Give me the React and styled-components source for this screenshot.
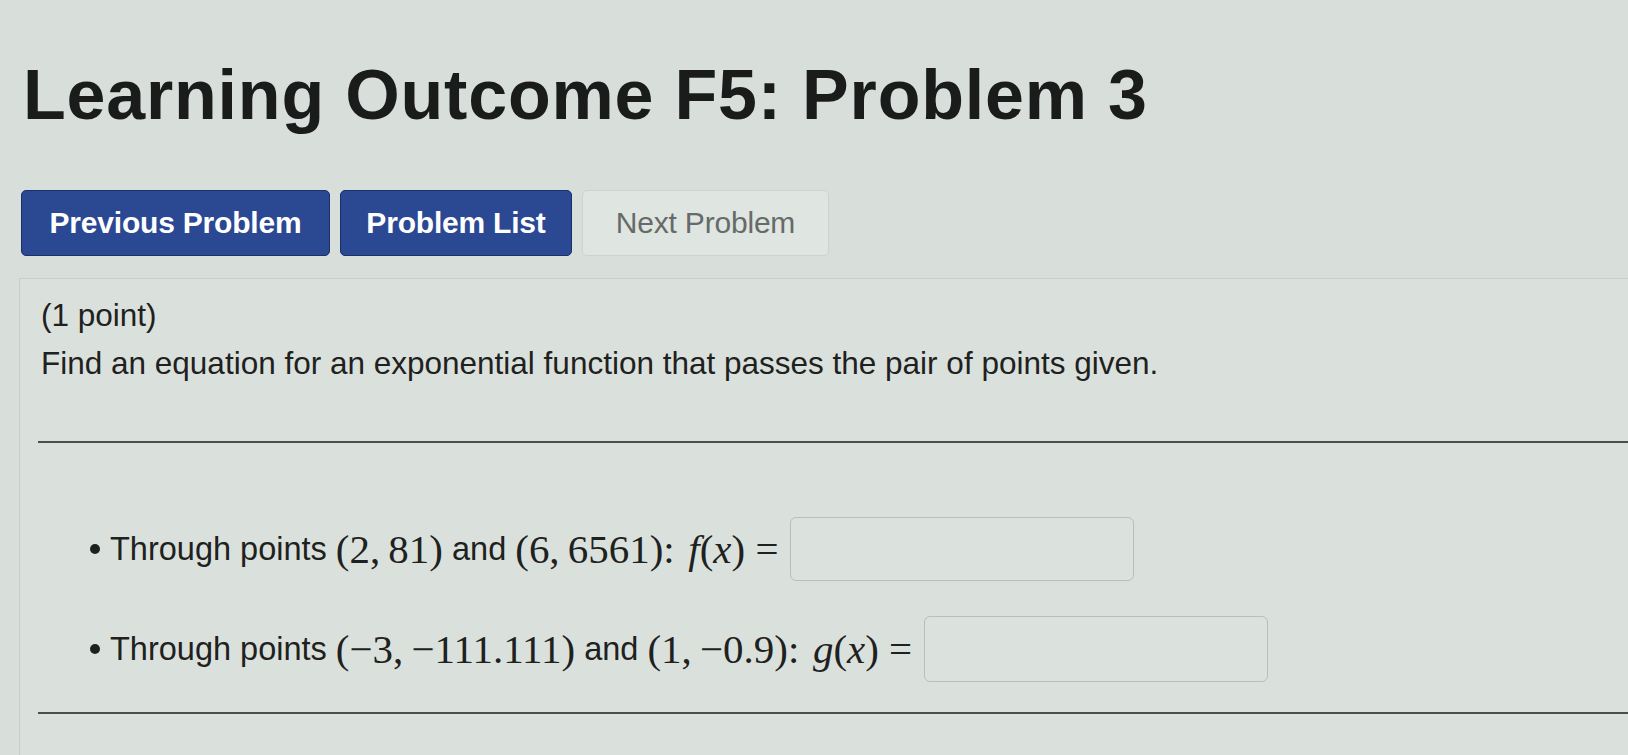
import React from "react";
import styled, { createGlobalStyle } from "styled-components";

const Global = createGlobalStyle`
  html, body {
    margin: 0;
    padding: 0;
    background: #d8dfda;
    overflow: hidden;
  }
  body {
    font-family: "Liberation Sans", Arial, sans-serif;
    color: #1d1f1e;
  }
`;

const Page = styled.div`
  width: 1628px;
  height: 755px;
  overflow: hidden;
  box-sizing: border-box;
  padding: 57px 0 0 23px;
  background: #d8dfda;
`;

const Title = styled.h1`
  margin: 0;
  font-size: 70px;
  line-height: 77px;
  font-weight: 700;
  color: #1a1b1b;
  letter-spacing: 0.8px;
`;

const Nav = styled.nav`
  display: flex;
  align-items: flex-start;
  gap: 10px;
  margin: 56px 0 0 -2px;
`;

const NavButton = styled.button`
  font-family: "Liberation Sans", Arial, sans-serif;
  font-size: 30px;
  font-weight: ${(p) => (p.$muted ? 400 : 700)};
  height: 66px;
  width: ${(p) => p.$w}px;
  padding: 0;
  border-radius: 5px;
  letter-spacing: -0.2px;
  cursor: ${(p) => (p.$muted ? "default" : "pointer")};
  color: ${(p) => (p.$muted ? "#666a68" : "#ffffff")};
  background: ${(p) => (p.$muted ? "#dfe5e1" : "#2b4893")};
  border: 1px solid ${(p) => (p.$muted ? "#cdd3cf" : "#1c306b")};
`;

const Panel = styled.section`
  margin: 22px -60px 0 -4px;
  height: 520px;
  border-top: 1px solid #c7cec9;
  border-left: 1px solid #c7cec9;
  background: #dae1dc;
  padding: 12px 0 0 21px;
`;

const Line = styled.div`
  font-size: 31.5px;
  line-height: 48px;
  color: #1f2120;
`;

const Rule = styled.div`
  height: 2px;
  background: #4a4e4c;
  margin: ${(p) => p.$top}px 0 0 -3px;
`;

const List = styled.ul`
  list-style: none;
  margin: 73px 0 0 0;
  padding: 0;
  display: flex;
  flex-direction: column;
  gap: 34px;
`;

const Item = styled.li`
  display: flex;
  align-items: center;
  height: 66px;
  font-size: 32.5px;
  color: #1f2120;
  white-space: pre;
`;

const Dot = styled.span`
  width: 10px;
  height: 10px;
  border-radius: 50%;
  background: #1f2120;
  margin: 0 10px 0 49px;
  flex: none;
`;

const Math = styled.span`
  font-family: "Liberation Serif", "Times New Roman", serif;
  font-size: 1.26em;
`;

const V = styled.i`
  font-style: italic;
`;

const Answer = styled.input`
  box-sizing: border-box;
  width: 344px;
  height: ${(p) => p.$h}px;
  margin-left: 12px;
  border: 1px solid #b8bfba;
  border-radius: 6px;
  background: #dbe2dd;
  font-size: 26px;
  padding: 0 12px;
  outline: none;
`;

export default function App() {
  return (
    <>
      <Global />
      <Page>
        <Title>Learning Outcome F5: Problem 3</Title>
        <Nav>
          <NavButton $w={309}>Previous Problem</NavButton>
          <NavButton $w={232}>Problem List</NavButton>
          <NavButton $w={247} $muted>
            Next Problem
          </NavButton>
        </Nav>
        <Panel>
          <Line>(1 point)</Line>
          <Line>Find an equation for an exponential function that passes the pair of points given.</Line>
          <Rule $top={54} />
          <List>
            <Item>
              <Dot />
              {"Through points "}
              <Math>(2,&#8201;81)</Math>
              {" and "}
              <Math>
                (6,&#8201;6561):&#8196;<V>f</V>(<V>x</V>)&#8197;=
              </Math>
              <Answer $h={64} aria-label="f(x)" />
            </Item>
            <Item>
              <Dot />
              {"Through points "}
              <Math>(−3,&#8201;−111.111)</Math>
              {" and "}
              <Math>
                (1,&#8201;−0.9):&#8196;<V>g</V>(<V>x</V>)&#8197;=
              </Math>
              <Answer $h={66} aria-label="g(x)" />
            </Item>
          </List>
          <Rule $top={30} />
        </Panel>
      </Page>
    </>
  );
}
